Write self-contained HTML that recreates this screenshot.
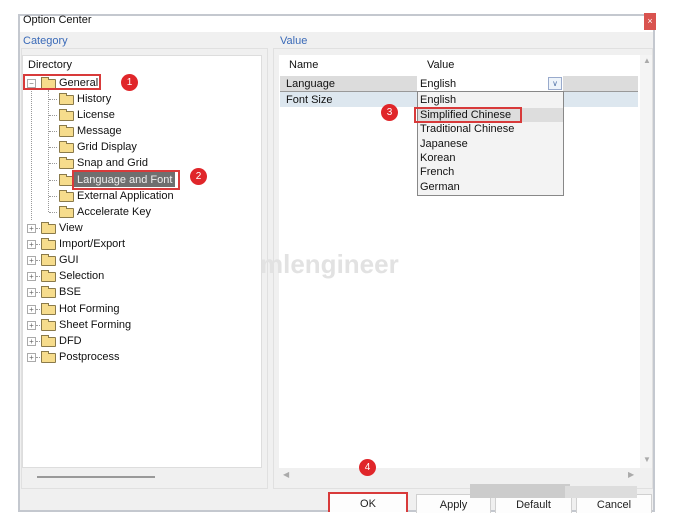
<!DOCTYPE html>
<html><head><style>
body{margin:0;width:675px;height:527px;background:#fff;position:relative;overflow:hidden;font-family:"Liberation Sans",sans-serif;font-size:11px;color:#111}
.a{position:absolute}
.t{position:absolute;white-space:nowrap;font-size:11px;line-height:14px}
.fold{position:absolute;width:13px;height:8px;background:#f6dc8c;border:1px solid #8a7a4a;border-radius:1px}
.fold:before{content:"";position:absolute;left:-1px;top:-3px;width:6px;height:2px;background:#f6dc8c;border:1px solid #8a7a4a;border-bottom:none}
.exp{position:absolute;width:7px;height:7px;border:1px solid #aaa;background:#fff;font-size:8px;line-height:7px;text-align:center;color:#666}
.badge{position:absolute;width:17px;height:17px;border-radius:50%;background:#e0262a;color:#fff;font-size:10px;text-align:center;line-height:17px}
.dot{position:absolute;border-top:1px dotted #999;height:0}
.btn{position:absolute;top:494px;height:18px;background:#fdfdfd;border:1px solid #d0d0d0;border-bottom:none;text-align:center;line-height:20px;font-size:11px;color:#222}
</style></head><body>
<div class="a" style="left:18px;top:14px;width:637px;height:498px;background:#f0f0f0;border:2px solid #c4c8cf;box-sizing:border-box"></div>
<div class="a" style="left:20px;top:16px;width:633px;height:16px;background:#fff"></div>
<div class="t" style="left:23px;top:13px">Option Center</div>
<div class="a" style="left:644px;top:13px;width:12px;height:17px;background:#d9534f;color:#fff;font-size:9px;text-align:center;line-height:17px">×</div>
<div class="t" style="left:23px;top:34px;color:#3a6ab8">Category</div>
<div class="t" style="left:280px;top:34px;color:#3a6ab8">Value</div>
<div class="a" style="left:21px;top:48px;width:247px;height:441px;border:1px solid #e0e0e0;box-sizing:border-box"></div>
<div class="a" style="left:22px;top:55px;width:240px;height:413px;background:#fff;border:1px solid #ddd;box-sizing:border-box"></div>
<div class="a" style="left:37px;top:476px;width:118px;height:2px;background:#999"></div>
<div class="a" style="left:273px;top:48px;width:380px;height:441px;border:1px solid #e0e0e0;box-sizing:border-box"></div>
<div class="a" style="left:279px;top:55px;width:361px;height:413px;background:#fff"></div>
<div class="a" style="left:640px;top:55px;width:12px;height:413px;background:#f4f4f4"></div>
<div class="t" style="left:643px;top:54px;color:#aaa;font-size:8px">▲</div>
<div class="t" style="left:643px;top:453px;color:#aaa;font-size:8px">▼</div>
<div class="t" style="left:283px;top:468px;color:#aaa;font-size:8px">◀</div>
<div class="t" style="left:628px;top:468px;color:#aaa;font-size:8px">▶</div>
<!-- tree -->
<div class="t" style="left:28px;top:58px">Directory</div>
<div class="a" style="left:31px;top:88px;height:132px;border-left:1px dotted #999"></div>
<div class="a" style="left:48px;top:90px;height:122px;border-left:1px dotted #999"></div>
<div class="a" style="left:74px;top:172px;width:101px;height:15px;background:#6f6f6f"></div>
<div class="exp" style="left:27px;top:79px">−</div>
<div class="fold" style="left:41px;top:79px"></div>
<div class="t" style="left:59px;top:76px">General</div>
<div class="a" style="left:23px;top:74px;width:78px;height:16px;border:2px solid #d83a3a;box-sizing:border-box"></div>
<div class="badge" style="left:121px;top:74px">1</div>
<div id="kids"></div>
<div class="a" style="left:72px;top:170px;width:108px;height:20px;border:2px solid #d83a3a;box-sizing:border-box"></div>
<div class="badge" style="left:190px;top:168px">2</div>
<script>
var k=["History","License","Message","Grid Display","Snap and Grid","Language and Font","External Application","Accelerate Key"];
var h="";
k.forEach(function(s,i){var y=99+i*16.1;h+='<div class="dot" style="left:49px;top:'+(y)+'px;width:8px"></div><div class="fold" style="left:59px;top:'+(y-4)+'px"></div><div class="t" style="left:77px;top:'+(y-7)+'px'+(i==5?';color:#eee':'')+'">'+s+'</div>';});
var r=["View","Import/Export","GUI","Selection","BSE","Hot Forming","Sheet Forming","DFD","Postprocess"];
r.forEach(function(s,i){var y=228+i*16.1;h+='<div class="exp" style="left:27px;top:'+(y-4)+'px">+</div><div class="dot" style="left:36px;top:'+(y)+'px;width:4px"></div><div class="fold" style="left:41px;top:'+(y-4)+'px"></div><div class="t" style="left:59px;top:'+(y-7)+'px">'+s+'</div>';});
document.getElementById("kids").outerHTML=h;
</script>
<!-- table -->
<div class="t" style="left:289px;top:58px">Name</div>
<div class="t" style="left:427px;top:58px">Value</div>
<div class="a" style="left:280px;top:76px;width:358px;height:15px;background:#dcdcdc"></div>
<div class="a" style="left:280px;top:91px;width:358px;height:1px;background:#999"></div>
<div class="a" style="left:280px;top:92px;width:358px;height:15px;background:#dde7ef"></div>
<div class="t" style="left:286px;top:77px">Language</div>
<div class="t" style="left:286px;top:93px">Font Size</div>
<div class="a" style="left:417px;top:76px;width:146px;height:15px;background:#fff"></div>
<div class="t" style="left:420px;top:77px">English</div>
<div class="a" style="left:548px;top:77px;width:14px;height:13px;border:1px solid #9ac;background:#eef4fa;box-sizing:border-box;color:#57a;font-size:8px;text-align:center;line-height:11px">∨</div>
<div class="a" style="left:417px;top:91px;width:147px;height:105px;background:#f3f3f3;border:1px solid #888;box-sizing:border-box"></div>
<div class="a" style="left:418px;top:108px;width:145px;height:14px;background:#ddd"></div>
<div class="t" style="left:420px;top:93px">English</div>
<div class="t" style="left:420px;top:108px">Simplified Chinese</div>
<div class="t" style="left:420px;top:122px">Traditional Chinese</div>
<div class="t" style="left:420px;top:137px">Japanese</div>
<div class="t" style="left:420px;top:151px">Korean</div>
<div class="t" style="left:420px;top:165px">French</div>
<div class="t" style="left:420px;top:180px">German</div>
<div class="a" style="left:414px;top:107px;width:108px;height:16px;border:2px solid #d83a3a;box-sizing:border-box"></div>
<div class="badge" style="left:381px;top:104px">3</div>
<div class="t" style="left:260px;top:249px;font-size:26px;line-height:30px;font-weight:bold;color:#e2e2e2">mlengineer</div>
<!-- buttons -->
<div class="btn" style="left:328px;width:80px;height:20px;border:2px solid #d83a3a;border-bottom:none;box-sizing:border-box;top:492px">OK</div>
<div class="btn" style="left:416px;width:73px">Apply</div>
<div class="btn" style="left:495px;width:75px">Default</div>
<div class="btn" style="left:576px;width:74px">Cancel</div>
<div class="a" style="left:470px;top:484px;width:100px;height:14px;background:#ccc"></div>
<div class="a" style="left:565px;top:486px;width:72px;height:12px;background:#ddd"></div>
<div class="badge" style="left:359px;top:459px">4</div>
</body></html>
